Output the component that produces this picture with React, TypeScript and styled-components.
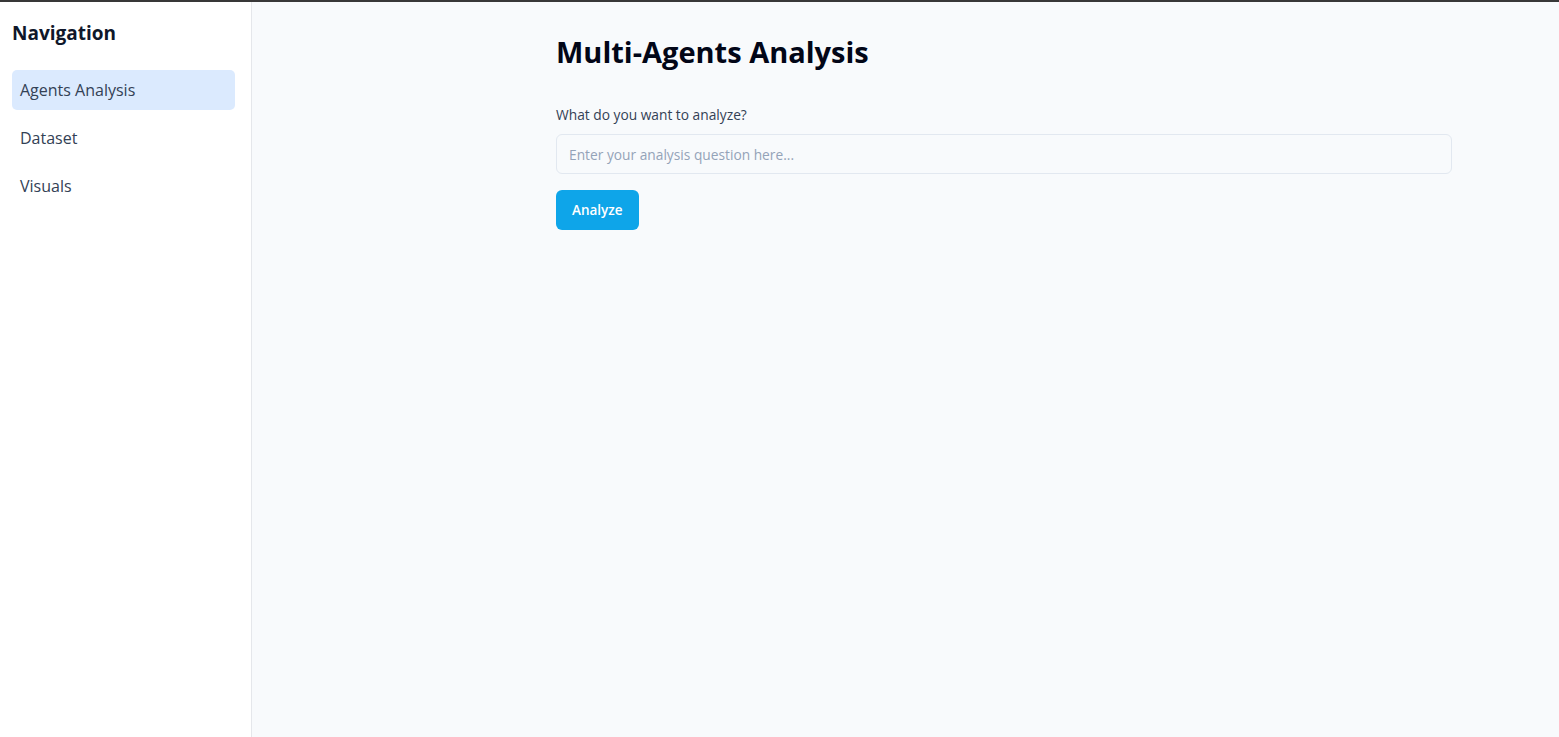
import React, {useState} from 'react';
import styled, {createGlobalStyle} from 'styled-components';

const GlobalStyle = createGlobalStyle`
  html, body {
    margin: 0;
    padding: 0;
    height: 100%;
  }
  body {
    font-family: "Open Sans", "Noto Sans", sans-serif;
    color: #0f172a;
    background: #f8fafc;
  }
  #root {
    height: 100%;
  }
`;

const Shell = styled.div`
  display: flex;
  height: 100vh;
  border-top: 2px solid #383838;
  box-sizing: border-box;
`;

const Sidebar = styled.aside`
  width: 252px;
  flex-shrink: 0;
  background: #ffffff;
  border-right: 1px solid #e5e7eb;
  padding: 18px 16px 0 12px;
  box-sizing: border-box;
`;

const NavTitle = styled.h2`
  margin: 0 0 24px;
  font-size: 19px;
  font-weight: 700;
  line-height: 26px;
  color: #0f172a;
`;

const NavList = styled.nav`
  display: flex;
  flex-direction: column;
  gap: 8px;
`;

const NavItem = styled.a<{active?: boolean}>`
  display: flex;
  align-items: center;
  height: 40px;
  padding: 0 8px;
  border-radius: 5px;
  font-size: 16px;
  color: #334155;
  text-decoration: none;
  cursor: pointer;
  background: ${props => (props.active ? '#dbeafe' : 'transparent')};

  &:hover {
    background: ${props => (props.active ? '#dbeafe' : '#f1f5f9')};
  }
`;

const Main = styled.main`
  flex: 1;
  background: #f8fafc;
  padding: 30px 0 0 304px;
  box-sizing: border-box;
`;

const Content = styled.div`
  max-width: 896px;
`;

const Title = styled.h1`
  margin: 0 0 33px;
  font-size: 29px;
  line-height: 40px;
  font-weight: 700;
  color: #020617;
`;

const Label = styled.label`
  display: block;
  font-size: 13.75px;
  line-height: 20px;
  color: #334155;
  margin-bottom: 9px;
`;

const Input = styled.input`
  display: block;
  width: 100%;
  height: 40px;
  box-sizing: border-box;
  padding: 0 12px;
  border: 1px solid #e2e8f0;
  border-radius: 6px;
  background: #f8fafc;
  font-family: inherit;
  font-size: 13.75px;
  color: #0f172a;
  outline: none;

  &::placeholder {
    color: #94a3b8;
  }
`;

const Button = styled.button`
  margin-top: 16px;
  height: 40px;
  padding: 0 16px;
  border: none;
  border-radius: 6px;
  background: #0ea5e9;
  color: #ffffff;
  font-family: inherit;
  font-size: 13.5px;
  font-weight: 600;
  cursor: pointer;
`;

const navItems = ['Agents Analysis', 'Dataset', 'Visuals'];

export default function App() {
  const [active, setActive] = useState('Agents Analysis');
  const [question, setQuestion] = useState('');

  return (
    <>
      <GlobalStyle />
      <Shell>
        <Sidebar>
          <NavTitle>Navigation</NavTitle>
          <NavList>
            {navItems.map(item => (
              <NavItem key={item} active={item === active} onClick={() => setActive(item)}>
                {item}
              </NavItem>
            ))}
          </NavList>
        </Sidebar>
        <Main>
          <Content>
            <Title>Multi-Agents Analysis</Title>
            <Label htmlFor="question">What do you want to analyze?</Label>
            <Input
              id="question"
              placeholder="Enter your analysis question here..."
              value={question}
              onChange={e => setQuestion(e.target.value)}
            />
            <Button>Analyze</Button>
          </Content>
        </Main>
      </Shell>
    </>
  );
}
